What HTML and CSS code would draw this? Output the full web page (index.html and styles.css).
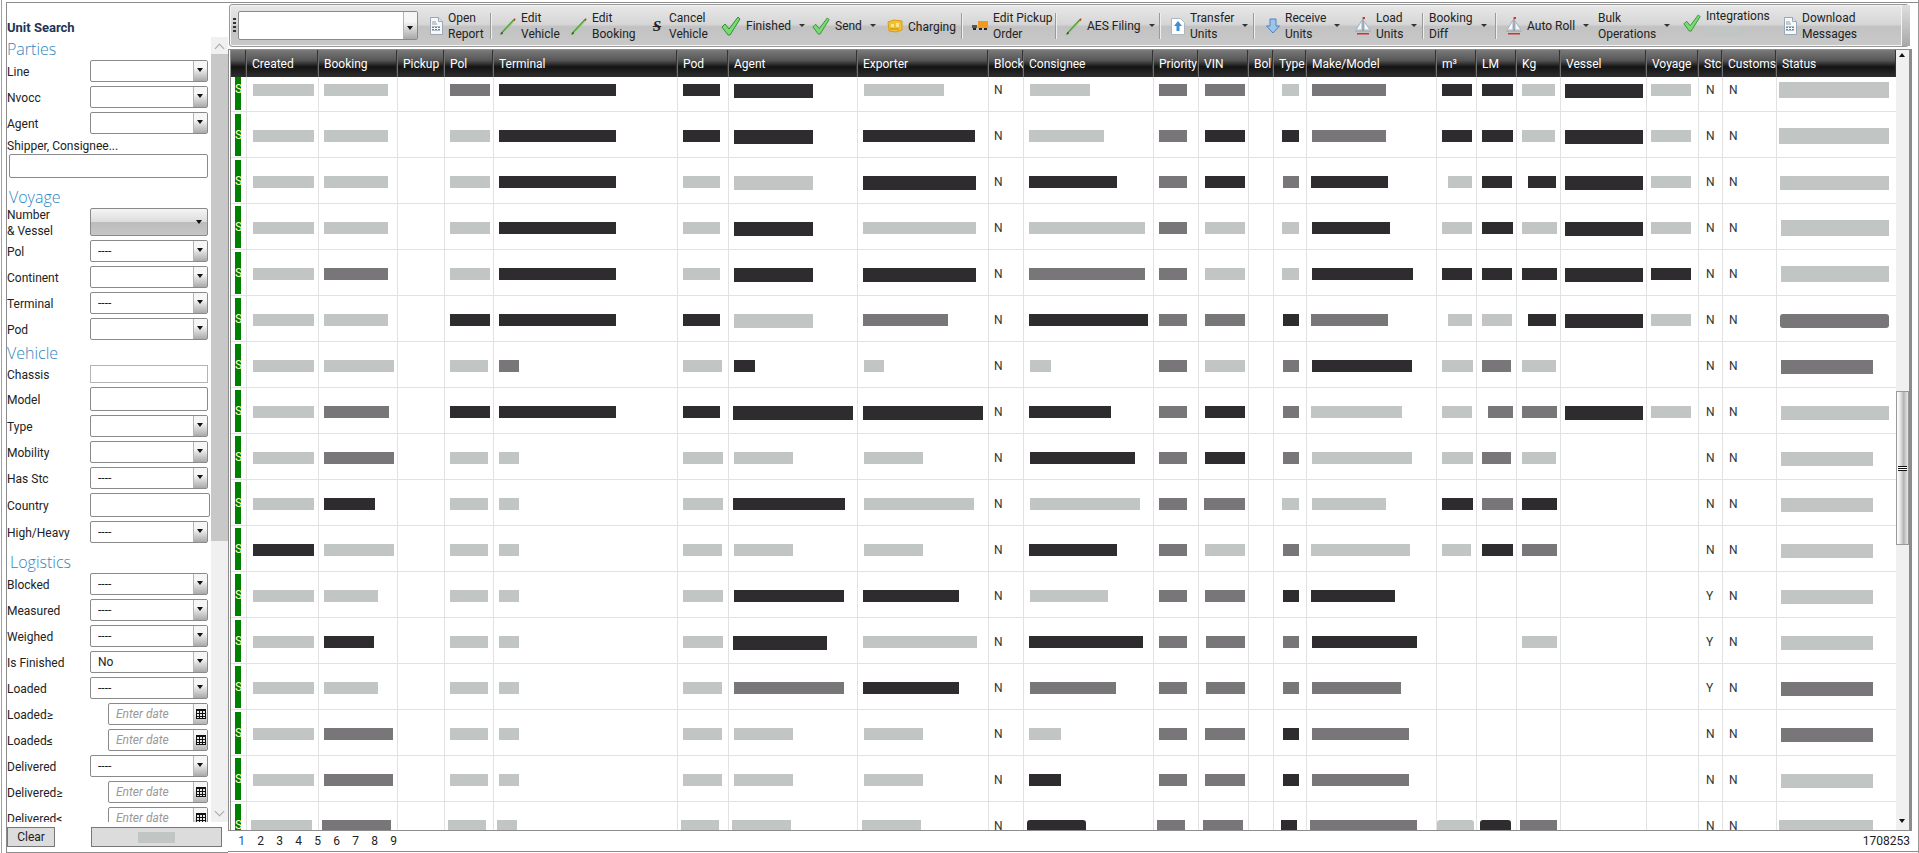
FILE: index.html
```html
<!DOCTYPE html>
<html lang="en">
<head>
  <meta charset="UTF-8">
  <title>Unit Search</title>
  <link rel="stylesheet" href="styles.css">
</head>
<body>
  <svg class="defs" width="0" height="0">
    <symbol id="i-doc" viewBox="0 0 14 18">
      <path d="M1.5.5h8l4 4v13h-12z" fill="#f6f8fb" stroke="#9aa7b5"/>
      <path d="M9.5.5v4h4" fill="#dfe5ec" stroke="#9aa7b5"/>
      <path d="M3 5h4M3 7h5" stroke="#8e9baa"/>
      <path d="M3 9.500h8v4H3z" fill="#6f8295"/>
      <path d="M5.500 10v3M8.500 10v3M3 11.500h8" stroke="#f6f8fb"/>
    </symbol>
    <symbol id="i-pencil" viewBox="0 0 16 18">
      <path d="M1 17 14 3" stroke="#4fa53a" stroke-width="2"/>
      <path d="M3 16 15 3" stroke="#a5d98f"/>
      <path d="M13 3l2-2 .5 1.500-1 1.500z" fill="#c0392b"/>
      <path d="M0 18l2-3 1 1z" fill="#333"/>
    </symbol>
    <symbol id="i-check" viewBox="0 0 20 20">
      <path d="M1 11l3-3 4 5L17 1l2 2-10 16h-2z" fill="#7ada72" stroke="#2f8f35"/>
    </symbol>
    <symbol id="i-coins" viewBox="0 0 16 14">
      <path d="M1 3l6-2 8 1v9l-6 2-7-1z" fill="#f2c12e" stroke="#d99a1c"/>
      <path d="M4 5h3v3H4zM9 4h3v4H9z" fill="#fbe68a"/>
      <path d="M3 10h9" stroke="#c9861a"/>
    </symbol>
    <symbol id="i-truck" viewBox="0 0 16 10">
      <path d="M6 0h10v7H6z" fill="#f39a1e"/>
      <path d="M0 4h5v3H0z" fill="#555"/>
      <path d="M1 8h3M7 8h3M12 8h3" stroke="#222" stroke-width="2"/>
    </symbol>
    <symbol id="i-up" viewBox="0 0 14 18">
      <path d="M.5 1.500h9l4 4v12H.5z" fill="#fff" stroke="#aeb6bf"/>
      <path d="M7 4l4 5H8.500v5h-3V9H3z" fill="#3b8fd6"/>
    </symbol>
    <symbol id="i-down" viewBox="0 0 14 16">
      <path d="M4 1h6v7h3.500L7 15 .5 8H4z" fill="#9cc4ec" stroke="#4f83bd"/>
    </symbol>
    <symbol id="i-boat" viewBox="0 0 16 18">
      <path d="M8 0v15" stroke="#777"/>
      <path d="M8 0h2v2H8z" fill="#d32f2f"/>
      <path d="M7 3 1 13h6zM9 4l6 9H9z" fill="#f4f8fb" stroke="#9fb4c4"/>
      <path d="M0 14h16v1H0z" fill="#9fb4c4"/>
      <path d="M2 16h12v1.500H2z" fill="#d32f2f"/>
    </symbol>
    <symbol id="i-cal" viewBox="0 0 10 10">
      <path d="M0 0h10v10H0z" fill="#111"/>
      <path d="M1 2h2v2H1zM4 2h2v2H4zM7 2h2v2H7zM1 5h2v2H1zM4 5h2v2H4zM7 5h2v2H7zM1 8h2v1H1zM4 8h2v1H4zM7 8h2v1H7z" fill="#e8e8e8"/>
    </symbol>
  </svg>

  <div class="shell">
    <aside class="pane">
      <div class="pane-title">Unit Search</div>
      <div class="pane-scroll">
        <form class="search">
          <h3 class="section section-parties">Parties</h3>
          <div class="field"><label>Line</label><div class="combo"><span></span><b></b></div></div>
          <div class="field"><label>Nvocc</label><div class="combo"><span></span><b></b></div></div>
          <div class="field"><label>Agent</label><div class="combo"><span></span><b></b></div></div>
          <div class="wide-label">Shipper, Consignee...</div>
          <div class="wide-input"></div>

          <h3 class="section section-voyage">Voyage</h3>
          <div class="field field-tall"><label>Number<br>&amp; Vessel</label><div class="combo combo-filled"><span></span><b></b></div></div>
          <div class="field"><label>Pol</label><div class="combo"><span>----</span><b></b></div></div>
          <div class="field"><label>Continent</label><div class="combo"><span></span><b></b></div></div>
          <div class="field"><label>Terminal</label><div class="combo"><span>----</span><b></b></div></div>
          <div class="field"><label>Pod</label><div class="combo"><span></span><b></b></div></div>

          <h3 class="section section-vehicle">Vehicle</h3>
          <div class="field field-thin"><label>Chassis</label><div class="text-box text-box-off"></div></div>
          <div class="field field-text"><label>Model</label><div class="text-box"></div></div>
          <div class="field"><label>Type</label><div class="combo"><span></span><b></b></div></div>
          <div class="field"><label>Mobility</label><div class="combo"><span></span><b></b></div></div>
          <div class="field"><label>Has Stc</label><div class="combo"><span>----</span><b></b></div></div>
          <div class="field field-text"><label>Country</label><div class="text-box text-box-long"></div></div>
          <div class="field"><label>High/Heavy</label><div class="combo"><span>----</span><b></b></div></div>

          <h3 class="section section-logistics">Logistics</h3>
          <div class="field"><label>Blocked</label><div class="combo"><span>----</span><b></b></div></div>
          <div class="field"><label>Measured</label><div class="combo"><span>----</span><b></b></div></div>
          <div class="field"><label>Weighed</label><div class="combo"><span>----</span><b></b></div></div>
          <div class="field"><label>Is Finished</label><div class="combo"><span>No</span><b></b></div></div>
          <div class="field"><label>Loaded</label><div class="combo"><span>----</span><b></b></div></div>
          <div class="field"><label>Loaded≥</label><div class="date"><span>Enter date</span><i><svg width="10" height="10"><use href="#i-cal"/></svg></i></div></div>
          <div class="field"><label>Loaded≤</label><div class="date"><span>Enter date</span><i><svg width="10" height="10"><use href="#i-cal"/></svg></i></div></div>
          <div class="field"><label>Delivered</label><div class="combo"><span>----</span><b></b></div></div>
          <div class="field"><label>Delivered≥</label><div class="date"><span>Enter date</span><i><svg width="10" height="10"><use href="#i-cal"/></svg></i></div></div>
          <div class="field"><label>Delivered≤</label><div class="date"><span>Enter date</span><i><svg width="10" height="10"><use href="#i-cal"/></svg></i></div></div>
        </form>
        <div class="form-scrollbar">
          <div class="chev chev-up"></div>
          <div class="form-thumb"></div>
          <div class="form-track"></div>
          <div class="chev chev-down"></div>
        </div>
      </div>
      <div class="pane-buttons">
        <button class="btn-clear" type="button">Clear</button>
        <button class="btn-search" type="button"><em></em></button>
      </div>
    </aside>

    <main class="main">
      <div class="toolbar">
        <div class="grip"></div>
        <div class="tool-combo"><span></span><b></b></div>
        <div class="tool"><svg width="14" height="18"><use href="#i-doc"/></svg><span>Open<br>Report</span></div>
        <div class="sep"></div>
        <div class="tool"><svg width="16" height="18"><use href="#i-pencil"/></svg><span>Edit<br>Vehicle</span></div>
        <div class="tool"><svg width="16" height="18"><use href="#i-pencil"/></svg><span>Edit<br>Booking</span></div>
        <div class="tool"><span class="strike">S</span><span>Cancel<br>Vehicle</span></div>
        <div class="tool"><svg width="20" height="20"><use href="#i-check"/></svg><span>Finished</span><u></u></div>
        <div class="tool"><svg width="18" height="20"><use href="#i-check"/></svg><span>Send</span><u></u></div>
        <div class="tool tool-low"><svg width="16" height="14"><use href="#i-coins"/></svg><span>Charging</span></div>
        <div class="sep"></div>
        <div class="tool"><svg width="16" height="10"><use href="#i-truck"/></svg><span>Edit Pickup<br>Order</span></div>
        <div class="sep"></div>
        <div class="tool"><svg width="16" height="18"><use href="#i-pencil"/></svg><span>AES Filing</span><u></u></div>
        <div class="sep"></div>
        <div class="tool"><svg width="14" height="18"><use href="#i-up"/></svg><span>Transfer<br>Units</span><u></u></div>
        <div class="sep"></div>
        <div class="tool"><svg width="14" height="16"><use href="#i-down"/></svg><span>Receive<br>Units</span><u></u></div>
        <div class="tool"><svg width="16" height="18"><use href="#i-boat"/></svg><span>Load<br>Units</span><u></u></div>
        <div class="sep"></div>
        <div class="tool"><span>Booking<br>Diff</span><u></u></div>
        <div class="sep"></div>
        <div class="tool"><svg width="16" height="18"><use href="#i-boat"/></svg><span>Auto Roll</span><u></u></div>
        <div class="tool"><span>Bulk<br>Operations</span><u></u></div>
        <div class="tool tool-top"><svg width="18" height="20"><use href="#i-check"/></svg><span>Integrations<em class="tool-bar"></em></span></div>
        <div class="tool"><svg width="14" height="18"><use href="#i-doc"/></svg><span>Download<br>Messages</span></div>
        <div class="overflow"></div>
      </div>

      <div class="grid-frame">
        <div class="grid">
          <div class="grid-row grid-head">
            <div></div><div>Created</div><div>Booking</div><div>Pickup</div><div>Pol</div><div>Terminal</div><div>Pod</div><div>Agent</div><div>Exporter</div><div>Block</div><div>Consignee</div><div>Priority</div><div>VIN</div><div>Bol</div><div>Type</div><div>Make/Model</div><div>m³</div><div>LM</div><div>Kg</div><div>Vessel</div><div>Voyage</div><div>Stc</div><div>Customs</div><div>Status</div>
          </div>
          <div class="grid-clip"><div class="grid-body" id="gridBody"></div></div>
        </div>
        <div class="grid-scrollbar">
          <div class="arrow arrow-up"></div>
          <div class="grid-track"><div class="grid-thumb"><span></span></div></div>
          <div class="arrow arrow-down"></div>
        </div>
      </div>

      <div class="pager">
        <div class="pages"><a class="current">1</a><a>2</a><a>3</a><a>4</a><a>5</a><a>6</a><a>7</a><a>8</a><a>9</a></div>
        <div class="total">1708253</div>
      </div>
    </main>
  </div>

  <script src="app.js"></script>
</body>
</html>
```

FILE: styles.css
```css
* { margin: 0; padding: 0; box-sizing: border-box; }
html, body { height: 853px; overflow: hidden; }
body {
  font-family: Roboto, "Noto Sans", sans-serif;
  font-size: 12px;
  color: #222;
  background: #fff;
}
.defs { display: block; height: 0; }
.shell {
  display: flex;
  height: 853px;
  padding: 2px 0 0 4px;
  margin-left: 1px;
  border-left: 1px solid #a0a0a0;
  border-right: 1px solid #999;
}

/* left search pane */
.pane {
  width: 222px;
  display: flex;
  flex-direction: column;
  border-left: 1px solid #8c8c8c;
  border-top: 1px solid #8c8c8c;
  border-bottom: 1px solid #8c8c8c;
}
.pane-title {
  height: 34px;
  padding-top: 17px;
  font-size: 13px;
  line-height: 16px;
  font-weight: 700;
  color: #1d3557;
}
.pane-scroll { display: flex; height: 785px; }
.search {
  width: 203px;
  display: flex;
  flex-direction: column;
  overflow: hidden;
}
.search > * { flex: none; }
.section {
  height: 20px;
  line-height: 20px;
  font-family: "Open Sans", sans-serif;
  font-size: 16px;
  font-weight: 300;
  color: #2f86c1;
}
.section-parties { margin-top: 2px; margin-bottom: 1px; }
.section-voyage { margin: 5px 0 1px 2px; }
.section-vehicle { margin: -1px 0 2px; }
.section-logistics { margin: 5px 0 1px 3px; }
.field {
  display: flex;
  align-items: center;
  height: 22px;
  margin-bottom: 4px;
}
.field label { width: 83px; flex: none; line-height: 16px; padding-top: 2px; }
.field-tall { height: 28px; }
.field-thin { height: 18px; }
.field-text { height: 24px; }
.combo, .date, .text-box, .wide-input {
  height: 100%;
  background: #fff;
  border: 1px solid #8a8a8a;
  border-radius: 2px;
}
.combo { display: flex; width: 118px; }
.combo span { flex: 1; padding-left: 7px; line-height: 20px; }
.combo b, .tool-combo b {
  width: 14px;
  flex: none;
  border-left: 1px solid #b4b4b4;
  background: linear-gradient(#f6f6f6 35%, #a9a9a9);
  position: relative;
}
.combo b::after, .tool-combo b::after {
  content: "";
  position: absolute;
  left: 3px;
  top: 7px;
  border: 3px solid transparent;
  border-top: 4px solid #111;
  border-bottom: 0;
}
.combo-filled b { background: none; border-left: 0; }
.combo-filled { background: linear-gradient(#f4f4f4, #dcdcdc 50%, #bcbcbc 50%, #c6c6c6); }
.combo-filled b::after { top: 11px; }
.date {
  display: flex;
  width: 100px;
  margin-left: 18px;
}
.date span { flex: 1; padding-left: 7px; line-height: 20px; font-style: italic; color: #999; }
.date i {
  width: 14px;
  display: flex;
  justify-content: center;
  padding-top: 5px;
  border-left: 1px solid #b4b4b4;
  background: linear-gradient(#f6f6f6 35%, #b4b4b4);
}
.text-box { width: 118px; }
.text-box-off { border-color: #b4b4b4; border-radius: 0; }
.text-box-long { width: 120px; }
.wide-label { height: 16px; line-height: 16px; }
.wide-input { height: 24px; margin: 0 2px 4px 2px; width: 199px; }

.form-scrollbar {
  width: 17px;
  margin-left: 1px;
  display: flex;
  flex-direction: column;
  background: #f0f0f0;
}
.form-thumb { height: 487px; background: #c8c8c8; }
.form-track { flex: 1; }
.chev { height: 17px; position: relative; }
.chev::after {
  content: "";
  position: absolute;
  left: 5px;
  width: 6px;
  height: 6px;
  border-left: 1px solid #a6a6a6;
  border-top: 1px solid #a6a6a6;
}
.chev-up::after { top: 8px; transform: rotate(45deg); }
.chev-down::after { top: 3px; transform: rotate(225deg); }

.pane-buttons { display: flex; padding: 5px 0 0 0; gap: 36px; }
.pane-buttons button {
  height: 20px;
  background: #dcdcdc;
  border: 1px solid #777;
  font-family: inherit;
  font-size: 12px;
  color: #222;
}
.btn-clear { width: 48px; }
.btn-search {
  width: 131px;
  display: flex;
  align-items: center;
  justify-content: center;
}
.btn-search em { width: 37px; height: 11px; background: #c1c6c4; }

/* right side */
.main {
  flex: 1;
  min-width: 0;
  display: flex;
  flex-direction: column;
  border-top: 1px solid #8c8c8c;
}
.toolbar {
  display: grid;
  grid-template-columns: 7px 191px 61px 10px 71px 79px 71px 91px 75px 74px 11px 83px 11px 93px 12px 82px 13px 89px 67px 7px 66px 11px 92px 85px 100px 118px 9px;
  height: 43px;
  margin: 1px 9px 0 1px;
  padding-left: 1px;
  align-items: center;
  border: 1px solid #999;
  border-radius: 3px;
  box-shadow: inset 0 0 0 1px #f4f4f4;
  background: linear-gradient(#e8e8e8, #d6d6d6 47%, #c2c2c2 53%, #c9c9c9);
  line-height: 16px;
}
.grip {
  width: 3px;
  height: 15px;
  margin-left: 2px;
  background: repeating-linear-gradient(#333 0 2px, transparent 2px 4px);
}
.tool-combo {
  display: flex;
  width: 180px;
  height: 29px;
  background: #fff;
  border: 1px solid #8a8a8a;
  border-radius: 2px;
}
.tool-combo span { flex: 1; }
.tool-combo b::after { top: 14px; }
.tool {
  display: flex;
  align-items: center;
  gap: 5px;
  white-space: nowrap;
}
.tool svg { flex: none; }
.tool-low span { padding-top: 3px; }
.tool-top { align-self: start; padding-top: 3px; }
.tool-bar { display: block; width: 34px; height: 11px; margin-top: 2px; background: #c1c6c4; }
.tool u {
  margin-left: 3px;
  border: 3px solid transparent;
  border-top: 3px solid #333;
  border-bottom: 0;
}
.strike {
  width: 14px;
  font-family: "Liberation Serif", serif;
  font-size: 15px;
  font-weight: 700;
  font-style: italic;
  text-align: center;
  text-decoration: line-through;
  color: #222;
}
.sep {
  width: 1px;
  height: 26px;
  background: #9a9a9a;
  box-shadow: 1px 0 0 #eee;
}
.overflow {
  height: 41px;
  background: linear-gradient(#dedede, #a9a9a9);
  border-left: 1px solid #f4f4f4;
}

.grid-frame {
  display: flex;
  height: 782px;
  margin: 2px 6px 0 0;
  border: 1px solid #8c8c8c;
  border-left-width: 3px;
  border-left-style: double;
}
.grid { flex: 1; min-width: 0; display: flex; flex-direction: column; }
.grid-row {
  display: grid;
  grid-template-columns: 16px 72px 79px 47px 49px 184px 51px 129px 131px 35px 130px 45px 50px 25px 33px 130px 40px 40px 44px 86px 52px 24px 54px 120px;
}
.grid-head {
  height: 27px;
  background: linear-gradient(#7a7a7a, #565656 38%, #141414 62%, #2e2e2e);
  color: #fff;
  line-height: 28px;
}
.grid-head div {
  padding-left: 5px;
  border-right: 1px solid #6e6e6e;
  box-shadow: inset -1px 0 0 #333;
  white-space: nowrap;
  overflow: hidden;
}
.grid-clip { flex: 1; overflow: hidden; }
.grid-body { margin-top: -11px; }
.grid-body .grid-row { height: 46px; border-bottom: 1px solid #e2e2e2; }
.cell { border-right: 1px solid #e2e2e2; padding-top: 18px; line-height: 12px; }
.cell-state { padding: 2px 0 0 4px; border-right: 1px solid #e2e2e2; }
.state {
  display: block;
  width: 6px;
  height: 42px;
  background: #008000;
  color: #ffffc8;
  font-size: 12px;
  line-height: 42px;
}
.bar { display: block; height: 12px; }
.bar-dark { background: #2e2c2f; }
.bar-mid { background: #787678; }
.bar-light { background: #c1c6c4; }
.bar-tall { height: 14px; }
.bar-huge { height: 16px; margin-top: -2px; }
.bar-round { border-radius: 3px; }
.flag { display: block; color: #333; }

.grid-scrollbar {
  width: 15px;
  display: flex;
  flex-direction: column;
  background: #f0f0f0;
  border-right: 2px solid #8c8c8c;
}
.arrow { height: 14px; position: relative; flex: none; }
.arrow::after {
  content: "";
  position: absolute;
  left: 3px;
  border: 3.500px solid transparent;
}
.arrow-up::after { top: 3px; border-bottom: 4px solid #111; border-top: 0; }
.arrow-down::after { top: 3px; border-top: 4px solid #111; border-bottom: 0; }
.grid-track { flex: 1; padding-top: 327px; }
.grid-thumb {
  height: 154px;
  border: 1px solid #999;
  background: linear-gradient(90deg, #fff, #e6e6e6 30%, #b4b4b4 60%, #e8e8e8);
  display: flex;
  align-items: center;
  justify-content: center;
}
.grid-thumb span {
  width: 9px;
  height: 5px;
  border-top: 1px solid #111;
  border-bottom: 1px solid #111;
  background: linear-gradient(#fff 0 1px, #111 1px 2px, #fff 2px);
}

.pager {
  height: 21px;
  display: flex;
  justify-content: space-between;
  align-items: center;
  padding: 0 8px 0 4px;
  border-bottom: 1px solid #8c8c8c;
}
.pages { display: flex; }
.pages a { width: 19px; text-align: center; color: #222; }
.pages .current { color: #1a4fd0; }
```

FILE: app.js
```js
// one string per grid row: d/m/l = dark, mid, light bar + width, t tall, h huge, r round, @n nudge
const ROWS = [
  "l61 l64 - m40 d117 d37 d79t l80 N l60@1 m28 m40 - l17@-1 m74 d30 d31 l33 d78t l40 N N l110h@-2",
  "l61 l64 - l40 d117 d37 d79t d112@-1 N l75 m28 d40 - d17@-1 m74 d30 d31 l33 d78t l40 N N l110h@-2",
  "l61 l64 - l40 d117 l37 l79t d113t@-1 N d88 m28 d40 - m16 d77@-1 l24@6 d30 d28@6 d78t l40 N N l109t@-1",
  "l61 l64 - l40 d117 l37 d79t l113@-1 N l116 m28 l40 - l17@-1 d78 l30 d31 l35 d78t l40 N N l108h",
  "l61 m64 - l40 d117 l37 d79t d113t@-1 N m116 m28 l40 - l17@-1 d101 d30 d30 d35 d78t d40 N N l108h",
  "l61 l64 - d40 d117 d37 l79t m85@-1 N d119 m28 m40 - d16 m77@-1 l24@6 l30 d28@6 d78t l40 N N m109tr@-1",
  "l61 l70 - l38 m20 l39 d21 l20 N l21@1 m28 l40 - m16 d100 l31 m29 l34 - - N N m92t",
  "l61 m65 - d40 d117 d37 d120t@-1 d120t@-1 N d82 m28 d40 - m16 l91@-1 l30 m25@6 m35 d78t l40 N N l108t",
  "l61 m70 - l38 l20 l40 l59 l59 N d105@1 m28 d40 - m16 l100 l31 m29 l34 - - N N l92t",
  "l61 d51 - l38 l20 l40 d112@-1 l110 N l110@1 m28 m41@-1 - l17@-1 l74 d31 m31 d35 - - N N l92t",
  "d61 l70 - l38 l20 l39 l59 l59 N d88 m28 l40 - m16 l99@-1 l29 d31 m35 - - N N l92t",
  "l61 l54 - l38 l20 l40 d110 d96@-1 N l78@1 m28 m40 - d16 d84@-1 - - - - - Y N l92t",
  "l61 d50 - l38 l20 l40 d94t@-1 l114@-1 N d114 m28 m39@1 - m16 d105 - - l35 - - Y N l92t",
  "l61 l54 - l38 l20 l39 m110 d96@-1 N m86@1 m28 m39@1 - m16 m89 - - - - - Y N m92t",
  "l61 m69 - l38 l20 l39 l59 l59 N l32 m28 m40 - d16 m97 - - - - - N N m92t",
  "l61 m69 - l38 l20 l39 l59 l59 N d32 m28 m40 - d16 m97 - - - - - N N l92t",
  "l61@-2 m69@-2 - l38@-2 l20@-2 l38@-2 l59@-2 l59@-2 N d59r@-2 m28@-2 m40@-2 - d16@-2 m107@-2 l37r@-5 d31r@-2 m37@-2 - - N N l94t@-2"
];

// left inset of each column, in px
const PAD = [6, 5, 5, 5, 5, 5, 5, 6, 5, 5, 5, 6, 5, 9, 5, 5, 5, 5, 4, 4, 7, 6, 4];
const TONES = { d: "bar-dark", m: "bar-mid", l: "bar-light" };

function renderCell(token, col) {
  if (token === "-") return '<div class="cell"></div>';
  if (token === "N" || token === "Y") {
    return `<div class="cell"><span class="flag" style="margin-left:${PAD[col]}px">${token}</span></div>`;
  }
  const m = token.match(/^([dml])(\d+)(t?)(h?)(r?)(?:@(-?\d+))?$/);
  const left = PAD[col] + Number(m[6] || 0);
  let cls = "bar " + TONES[m[1]];
  if (m[3]) cls += " bar-tall";
  if (m[4]) cls += " bar-huge";
  if (m[5]) cls += " bar-round";
  return `<div class="cell"><span class="${cls}" style="width:${m[2]}px;margin-left:${left}px"></span></div>`;
}

document.getElementById("gridBody").innerHTML = ROWS.map((row) => {
  const cells = row.split(" ").map(renderCell).join("");
  return `<div class="grid-row"><div class="cell-state"><span class="state">S</span></div>${cells}</div>`;
}).join("");
```
